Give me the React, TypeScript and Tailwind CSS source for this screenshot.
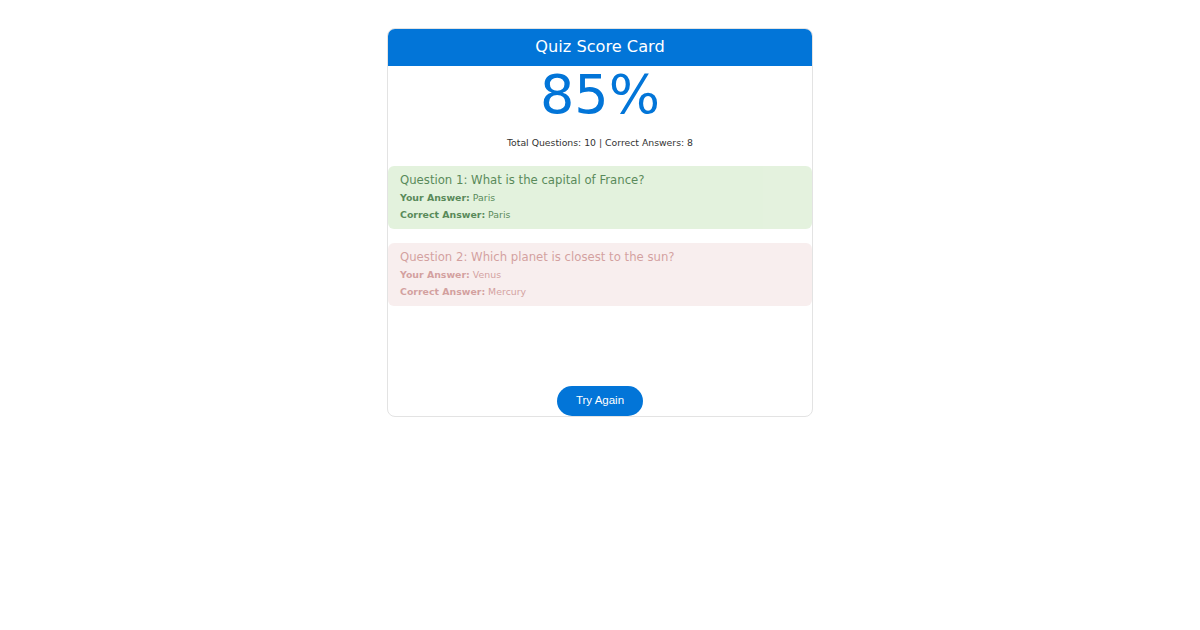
export default function App() {
  return (
    <div className="w-[1200px] h-[630px] bg-white flex justify-center" style={{ fontFamily: '"DejaVu Sans", sans-serif' }}>
      <div className="mt-[28px] w-[426px] h-[389px] border border-[#e3e3e3] rounded-lg flex flex-col overflow-hidden">
        <div className="h-[37px] bg-[#0275d8] flex items-center justify-center text-white text-[16.2px] shrink-0">
          Quiz Score Card
        </div>
        <div className="mt-[2px] text-center text-[#0275d8] text-[54px] leading-none">85%</div>
        <div className="mt-[15px] text-center text-[#333333] text-[9.3px] leading-[12px]">
          Total Questions: 10 | Correct Answers: 8
        </div>
        <div className="mt-[17px] bg-[#dff0d8] text-[#3c763d] rounded-md pt-[5px] pb-[6px] px-[12px] opacity-85">
          <div className="text-[11.7px] leading-[18px]">Question 1: What is the capital of France?</div>
          <div className="text-[9.4px] leading-[17px]"><span className="font-bold">Your Answer:</span> Paris</div>
          <div className="text-[9.4px] leading-[17px]"><span className="font-bold">Correct Answer:</span> Paris</div>
        </div>
        <div className="mt-[14px] bg-[#f2dede] text-[#a94442] rounded-md pt-[5px] pb-[6px] px-[12px] opacity-50">
          <div className="text-[11.7px] leading-[18px]">Question 2: Which planet is closest to the sun?</div>
          <div className="text-[9.4px] leading-[17px]"><span className="font-bold">Your Answer:</span> Venus</div>
          <div className="text-[9.4px] leading-[17px]"><span className="font-bold">Correct Answer:</span> Mercury</div>
        </div>
        <div className="flex-1" />
        <div className="flex justify-center shrink-0">
          <button
            className="h-[30px] w-[86px] rounded-full bg-[#0275d8] text-white text-[11.5px]"
            style={{ fontFamily: '"Liberation Sans", Arial, sans-serif' }}
          >
            Try Again
          </button>
        </div>
      </div>
    </div>
  );
}
